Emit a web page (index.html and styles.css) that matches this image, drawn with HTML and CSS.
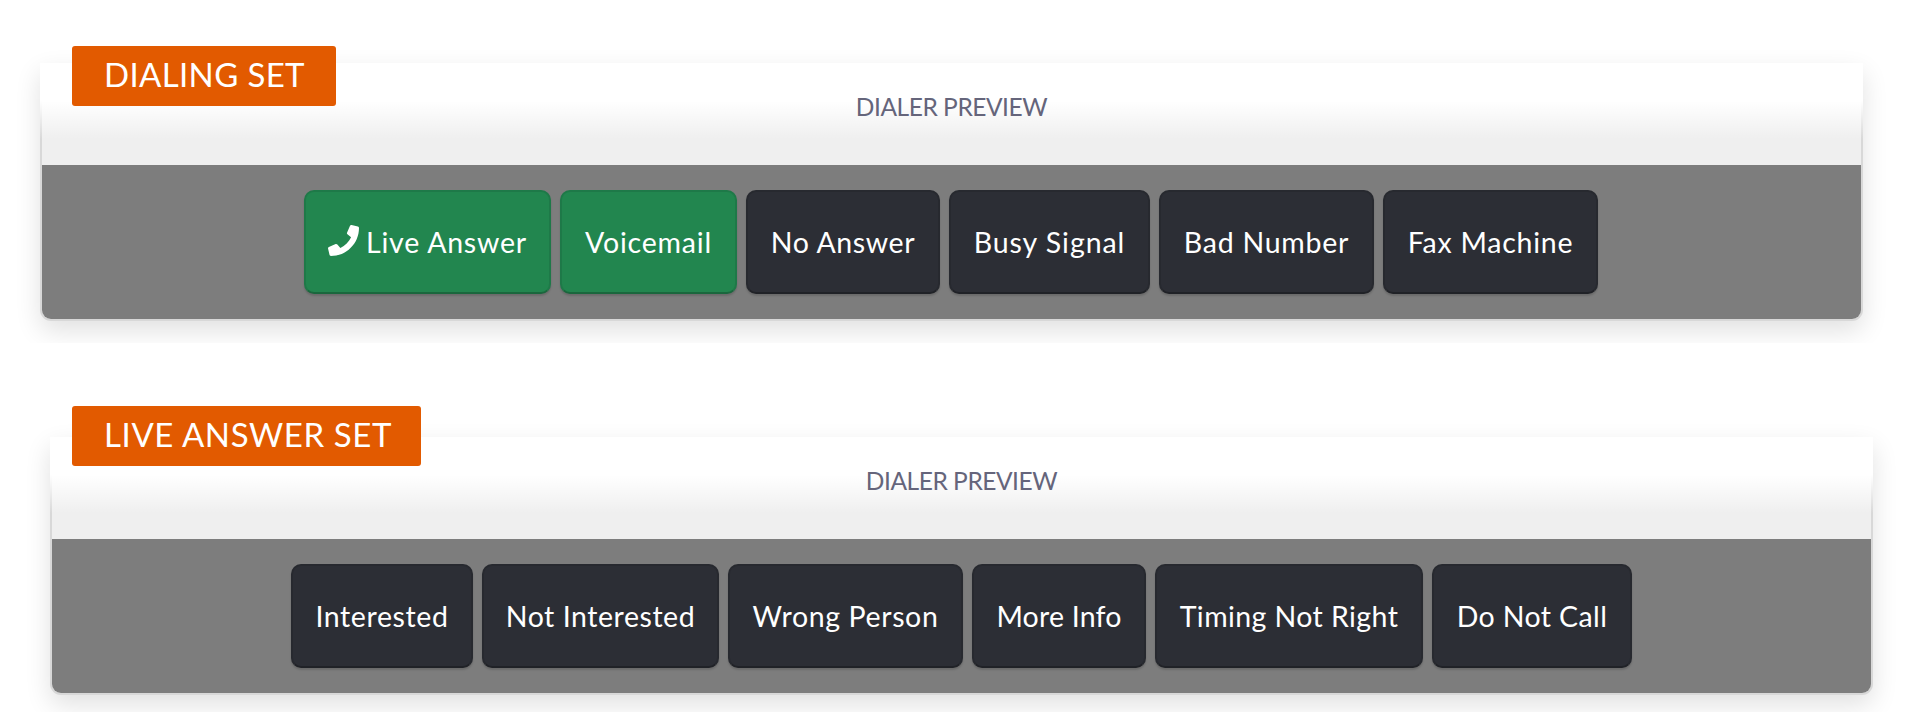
FILE: index.html
```
<!DOCTYPE html>
<html lang="en">

<head>
  <meta charset="UTF-8">
  <meta name="viewport" content="width=device-width, initial-scale=1.0">
  <title>Dialer Preview</title>
  <link rel="stylesheet" href="styles.css">
</head>

<body>
  <section class="set dialing-set">
    <h2 class="set-label">DIALING SET</h2>
    <div class="card">
      <div class="card-header">DIALER PREVIEW</div>
      <div class="card-body">
        <button class="btn btn-green live-answer">
          <svg class="icon" viewBox="0 0 512 512">
            <path d="M493.4 24.6l-104-24c-11.3-2.6-22.9 3.3-27.5 13.9l-48 112c-4.2 9.8-1.4 21.3 6.9 28l60.6 49.6c-36 76.7-98.9 140.5-177.2 177.2l-49.6-60.6c-6.8-8.3-18.2-11.1-28-6.9l-112 48C3.9 366.5-2 378.1.6 389.4l24 104C27.1 504.2 36.7 512 48 512c256.1 0 464-207.5 464-464 0-11.2-7.7-20.9-18.6-23.4z" />
          </svg>
          <span>Live Answer</span>
        </button>
        <button class="btn btn-green voicemail"><span>Voicemail</span></button>
        <button class="btn no-answer"><span>No Answer</span></button>
        <button class="btn busy-signal"><span>Busy Signal</span></button>
        <button class="btn bad-number"><span>Bad Number</span></button>
        <button class="btn fax-machine"><span>Fax Machine</span></button>
      </div>
    </div>
  </section>

  <section class="set live-set">
    <h2 class="set-label set-label-wide">LIVE ANSWER SET</h2>
    <div class="card">
      <div class="card-header">DIALER PREVIEW</div>
      <div class="card-body">
        <button class="btn interested"><span>Interested</span></button>
        <button class="btn not-interested"><span>Not Interested</span></button>
        <button class="btn wrong-person"><span>Wrong Person</span></button>
        <button class="btn more-info"><span>More Info</span></button>
        <button class="btn timing"><span>Timing Not Right</span></button>
        <button class="btn do-not-call"><span>Do Not Call</span></button>
      </div>
    </div>
  </section>
</body>

</html>
```
FILE: styles.css
```
* {
  box-sizing: border-box;
}

body {
  margin: 0;
  background-color: #fff;
  font-family: Lato, "Open Sans", sans-serif;
}

/* The card shadow is cut off at the bottom of each set */
.set {
  position: relative;
  overflow: hidden;
}

.dialing-set {
  height: 343px;
  padding: 63px 59px 0 40px;
}

.live-set {
  height: 369px;
  padding: 94px 49px 0 50px;
}

/* Orange tag over the card's top left corner */
.set-label {
  position: absolute;
  top: 46px;
  left: 72px;
  z-index: 1;
  width: 264px;
  height: 60px;
  margin: 0;
  padding-left: 32px;
  border-radius: 3px;
  background-color: #e25a00;
  color: #fff;
  font-size: 33px;
  font-weight: 400;
  letter-spacing: 0.35px;
  line-height: 56px;
  white-space: nowrap;
}

.live-set .set-label {
  top: 63px;
}

.set-label-wide {
  width: 349px;
  letter-spacing: 0.6px;
}

.card {
  position: relative;
  height: 258px;
  border: 2px solid #d8d8d8;
  border-top: 0;
  border-radius: 0 0 11px 11px;
  background-color: #efefef;
  box-shadow: 0 10px 26px rgba(0, 0, 0, 0.12);
}

/* White fade over the header and the side borders */
.card::before {
  content: '';
  position: absolute;
  top: 0;
  left: -2px;
  right: -2px;
  height: 76px;
  background: linear-gradient(#fff 50%, rgba(255, 255, 255, 0));
}

.card-header {
  position: relative;
  height: 102px;
  color: #65657b;
  font-size: 24.5px;
  letter-spacing: -0.45px;
  line-height: 88px;
  text-align: center;
}

.card-body {
  display: flex;
  justify-content: center;
  gap: 9px;
  height: 154px;
  padding-top: 25px;
  border-radius: 0 0 9px 9px;
  background-color: #7d7d7d;
}

.dialing-set .card-body {
  padding-right: 1px;
}

.btn {
  display: flex;
  justify-content: center;
  align-items: center;
  gap: 7px;
  height: 104px;
  padding: 0 0 1px;
  border: 2px solid #27292f;
  border-bottom-color: #202227;
  border-radius: 10px;
  background-color: #2c2e35;
  box-shadow: 0 2px 2px rgba(0, 0, 0, 0.15);
  color: #fff;
  font-family: inherit;
  font-size: 28.5px;
  letter-spacing: 0.62px;
  white-space: nowrap;
}

.btn-green {
  border-color: #1e7948;
  border-bottom-color: #1a673d;
  background-color: #22864f;
}

.icon {
  width: 31px;
  height: 31px;
  margin-bottom: 2px;
  fill: #fff;
}

.live-answer {
  width: 247px;
  letter-spacing: 0.78px;
}

.voicemail {
  width: 177px;
  letter-spacing: 0.8px;
}

.no-answer {
  width: 194px;
}

.busy-signal {
  width: 201px;
  letter-spacing: 0.95px;
}

.bad-number,
.fax-machine {
  width: 215px;
  letter-spacing: 0.75px;
}

.interested {
  width: 182px;
}

.not-interested {
  width: 237px;
  letter-spacing: 0.55px;
}

.wrong-person {
  width: 235px;
}

.more-info {
  width: 174px;
  letter-spacing: 0.2px;
}

.timing {
  width: 268px;
  letter-spacing: 0.42px;
}

.do-not-call {
  width: 200px;
  letter-spacing: 0.38px;
}
```
